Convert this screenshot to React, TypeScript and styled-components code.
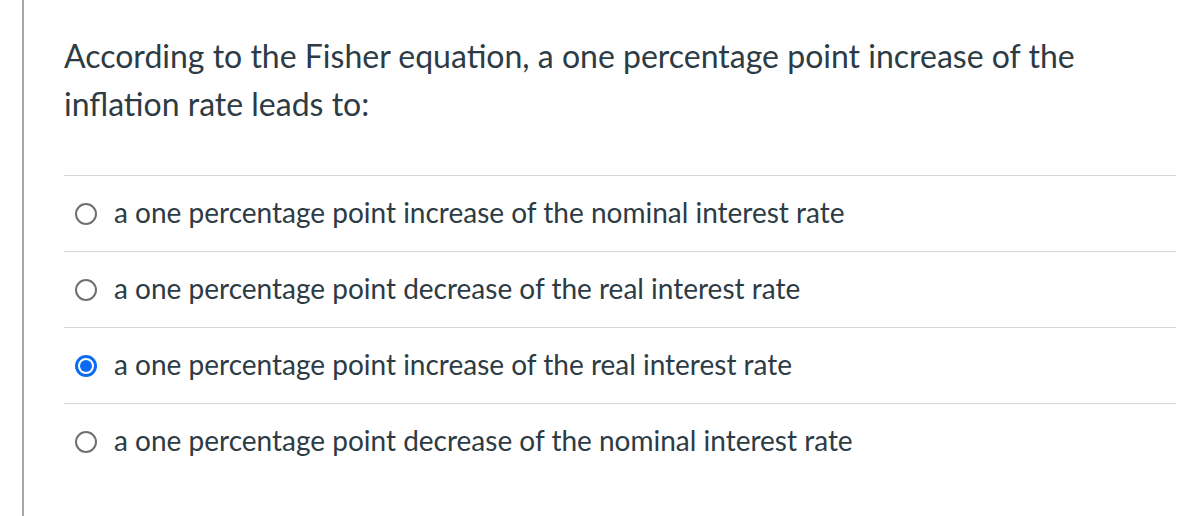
import React from "react";
import styled, { createGlobalStyle } from "styled-components";

const Global = createGlobalStyle`
  html, body { margin: 0; padding: 0; background: #ffffff; }
  body { font-family: Lato, "Noto Sans", sans-serif; color: #2d3b45; }
`;

const Page = styled.div`
  display: flex;
  min-height: 516px;
  padding-left: 22px;
  padding-right: 10px;
  box-sizing: border-box;
`;

const Rail = styled.div`
  width: 2px;
  background: #a8a8a8;
  flex: none;
`;

const Content = styled.div`
  flex: 1;
  padding-left: 40px;
  padding-top: 32px;
`;

const Question = styled.p`
  margin: 0 0 47px 0;
  font-size: 32px;
  line-height: 48px;
  color: #2d3b45;
`;

const Options = styled.div`
  display: flex;
  flex-direction: column;
`;

const Option = styled.label`
  display: flex;
  align-items: center;
  gap: 17px;
  height: 75px;
  border-top: 1px solid #d9d9d9;
  padding-left: 11px;
  font-size: 28px;
  color: #2d3b45;
  cursor: pointer;
`;

const Label = styled.span`
  margin-top: -3px;
`;

const Radio = styled.span<{ $checked?: boolean }>`
  flex: none;
  width: 22px;
  height: 22px;
  box-sizing: border-box;
  border-radius: 50%;
  border: ${(p) => (p.$checked ? "3px solid #0a6cf5" : "2px solid #6f6f6f")};
  display: flex;
  align-items: center;
  justify-content: center;
  &::after {
    content: "";
    display: ${(p) => (p.$checked ? "block" : "none")};
    width: 12px;
    height: 12px;
    border-radius: 50%;
    background: #0a6cf5;
  }
`;

const answers = [
  "a one percentage point increase of the nominal interest rate",
  "a one percentage point decrease of the real interest rate",
  "a one percentage point increase of the real interest rate",
  "a one percentage point decrease of the nominal interest rate",
];

export default function App() {
  return (
    <>
      <Global />
      <Page>
        <Rail />
        <Content>
          <Question>
            According to the Fisher equation, a one percentage point increase of the inflation rate leads to:
          </Question>
          <Options>
            {answers.map((a, i) => (
              <Option key={i}>
                <Radio $checked={i === 2} />
                <Label>{a}</Label>
              </Option>
            ))}
          </Options>
        </Content>
      </Page>
    </>
  );
}
